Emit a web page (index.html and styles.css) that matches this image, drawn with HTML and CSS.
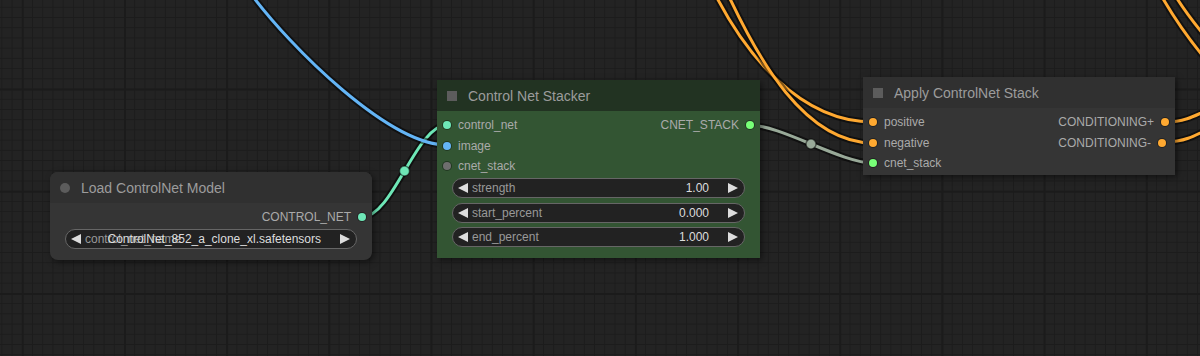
FILE: index.html
```html
<!DOCTYPE html>
<html lang="en">
<head>
    <meta charset="UTF-8">
    <title>Control Net Stack</title>
    <link rel="stylesheet" href="styles.css">
</head>
<body>

<div class="canvas">
    <!-- links are drawn under the nodes -->
    <svg class="links" width="1200" height="356" viewBox="0 0 1200 356">
        <g class="link link-cnet">
            <path class="link-border" d="M 362 217 C 393 217, 416 125, 447 125"/>
            <path class="link-line" d="M 362 217 C 393 217, 416 125, 447 125"/>
            <circle cx="404.5" cy="171" r="5"/>
        </g>
        <g class="link link-image">
            <path class="link-border" d="M 248 -10 C 292 50, 390 145, 447 145"/>
            <path class="link-line" d="M 248 -10 C 292 50, 390 145, 447 145"/>
        </g>
        <g class="link link-stack">
            <path class="link-border" d="M 749 125 C 781 125, 841 163, 873 163"/>
            <path class="link-line" d="M 749 125 C 781 125, 841 163, 873 163"/>
            <circle cx="811" cy="144" r="5"/>
        </g>
        <g class="link link-cond">
            <path class="link-border" d="M 712 -12 C 745 55, 800 122, 873 122"/>
            <path class="link-line" d="M 712 -12 C 745 55, 800 122, 873 122"/>
            <path class="link-border" d="M 725 -12 C 758 60, 805 143, 873 143"/>
            <path class="link-line" d="M 725 -12 C 758 60, 805 143, 873 143"/>
            <path class="link-border" d="M 1165 122 C 1190 122, 1200 112, 1230 100"/>
            <path class="link-line" d="M 1165 122 C 1190 122, 1200 112, 1230 100"/>
            <path class="link-border" d="M 1165 142 C 1190 142, 1200 132, 1230 118"/>
            <path class="link-line" d="M 1165 142 C 1190 142, 1200 132, 1230 118"/>
            <path class="link-border" d="M 1158 -10 C 1172 15, 1188 40, 1215 70"/>
            <path class="link-line" d="M 1158 -10 C 1172 15, 1188 40, 1215 70"/>
            <path class="link-border" d="M 1172 -10 C 1182 8, 1195 25, 1215 48"/>
            <path class="link-line" d="M 1172 -10 C 1182 8, 1195 25, 1215 48"/>
        </g>
    </svg>

    <div class="node node-round node-load">
        <div class="node-title"><span class="title-box title-dot"></span>Load ControlNet Model</div>
        <div class="node-body">
            <div class="slots">
                <div class="inputs"></div>
                <div class="outputs">
                    <div class="slot">CONTROL_NET<span class="dot c-cnet"></span></div>
                </div>
            </div>
            <div class="widgets">
                <div class="widget">
                    <span class="arrow arrow-left"></span>
                    <div class="w-text">
                        <span class="w-label">control_net_name</span>
                        <span class="w-value">ControlNet_852_a_clone_xl.safetensors</span>
                    </div>
                    <span class="arrow arrow-right"></span>
                </div>
            </div>
        </div>
    </div>

    <div class="node node-green node-stacker">
        <div class="node-title"><span class="title-box"></span>Control Net Stacker</div>
        <div class="node-body">
            <div class="slots">
                <div class="inputs">
                    <div class="slot"><span class="dot c-cnet"></span>control_net</div>
                    <div class="slot"><span class="dot c-image"></span>image</div>
                    <div class="slot"><span class="dot c-empty"></span>cnet_stack</div>
                </div>
                <div class="outputs">
                    <div class="slot">CNET_STACK<span class="dot c-stack"></span></div>
                </div>
            </div>
            <div class="widgets">
                <div class="widget">
                    <span class="arrow arrow-left"></span>
                    <div class="w-text">
                        <span class="w-label">strength</span>
                        <span class="w-value">1.00</span>
                    </div>
                    <span class="arrow arrow-right"></span>
                </div>
                <div class="widget">
                    <span class="arrow arrow-left"></span>
                    <div class="w-text">
                        <span class="w-label">start_percent</span>
                        <span class="w-value">0.000</span>
                    </div>
                    <span class="arrow arrow-right"></span>
                </div>
                <div class="widget">
                    <span class="arrow arrow-left"></span>
                    <div class="w-text">
                        <span class="w-label">end_percent</span>
                        <span class="w-value">1.000</span>
                    </div>
                    <span class="arrow arrow-right"></span>
                </div>
            </div>
        </div>
    </div>

    <div class="node node-apply">
        <div class="node-title"><span class="title-box"></span>Apply ControlNet Stack</div>
        <div class="node-body">
            <div class="slots">
                <div class="inputs">
                    <div class="slot"><span class="dot c-cond"></span>positive</div>
                    <div class="slot"><span class="dot c-cond"></span>negative</div>
                    <div class="slot"><span class="dot c-stack"></span>cnet_stack</div>
                </div>
                <div class="outputs">
                    <div class="slot">CONDITIONING+<span class="dot c-cond"></span></div>
                    <div class="slot">CONDITIONING-<span class="dot c-cond"></span></div>
                </div>
            </div>
        </div>
    </div>
</div>

</body>
</html>
```

FILE: styles.css
```css
* {
    box-sizing: border-box;
}
body {
    margin: 0;
    background-color: #222;
    font-family: "Liberation Sans", Arial, sans-serif;
    overflow: hidden;
}
.canvas {
    position: relative;
    width: 1200px;
    height: 356px;
    overflow: hidden;
    background-color: #232323;
    background-image:
        linear-gradient(#1b1b1b 2px, transparent 2px),
        linear-gradient(90deg, #1b1b1b 2px, transparent 2px),
        linear-gradient(#1c1c1c 1px, transparent 1px),
        linear-gradient(90deg, #1c1c1c 1px, transparent 1px);
    background-size: 102.2px 102.2px, 102.2px 102.2px, 10.22px 10.22px, 10.22px 10.22px;
    background-position: 0 88.6px, 21.8px 0, 0 6.8px, 1.4px 0;
}

/* links */
.links {
    position: absolute;
    left: 0;
    top: 0;
}
.link path {
    fill: none;
}
.link-border {
    stroke: rgba(0, 0, 0, 0.5);
    stroke-width: 7;
}
.link-line {
    stroke-width: 3;
}
.link circle {
    stroke: rgba(0, 0, 0, 0.5);
    stroke-width: 1.5;
}
.link-cnet .link-line { stroke: #6ee7b7; }
.link-cnet circle { fill: #6ee7b7; }
.link-image .link-line { stroke: #64b5f6; }
.link-stack .link-line { stroke: #99aa99; }
.link-stack circle { fill: #99aa99; }
.link-cond .link-line { stroke: #ffa931; }

/* nodes */
.node {
    position: absolute;
    background-color: #353535;
    box-shadow: 2px 2px 6px rgba(0, 0, 0, 0.5);
}
.node-round {
    border-radius: 8px;
}
.node-load {
    left: 50px;
    top: 172px;
    width: 322px;
}
.node-stacker {
    left: 437px;
    top: 80px;
    width: 323px;
}
.node-apply {
    left: 863px;
    top: 77px;
    width: 312px;
}
.node-title {
    height: 31px;
    display: flex;
    align-items: center;
    gap: 11px;
    padding-left: 10px;
    font-size: 14px;
    color: #9c9c9c;
    background-color: #303030;
}
.node-round .node-title {
    border-radius: 8px 8px 0 0;
}
.node-green {
    background-color: #335533;
}
.node-green .node-title {
    background-color: #223322;
}
.title-box {
    width: 10px;
    height: 10px;
    background-color: #5c5c5c;
}
.title-dot {
    border-radius: 50%;
}
.node-body {
    padding: 4px 0 11px;
}
.node-apply .node-body {
    padding-bottom: 1.5px;
}
.slots {
    display: flex;
    justify-content: space-between;
}
.slot {
    display: flex;
    align-items: center;
    gap: 7px;
    height: 20.5px;
    font-size: 12px;
    color: #aaa;
}
.inputs .slot {
    padding-left: 6px;
}
.outputs .slot {
    padding-right: 6px;
}
.dot {
    width: 8px;
    height: 8px;
    border-radius: 50%;
    box-shadow: 0 0 0 1px rgba(0, 0, 0, 0.35);
}
.c-cnet { background-color: #6ee7b7; }
.c-image { background-color: #64b5f6; }
.c-stack { background-color: #77ff77; }
.c-cond { background-color: #ffa931; }
.c-empty { background-color: #6e6e6e; }

/* widgets */
.widgets {
    display: flex;
    flex-direction: column;
    gap: 4.5px;
    margin: 1.5px 15px 0;
}
.widget {
    height: 20px;
    display: flex;
    align-items: center;
    padding: 0 6px 0 5px;
    border: 1px solid #666;
    border-radius: 10px;
    background-color: #222;
    font-size: 12px;
}
.arrow {
    width: 0;
    height: 0;
    border-top: 5px solid transparent;
    border-bottom: 5px solid transparent;
}
.arrow-left {
    border-right: 10px solid #ddd;
}
.arrow-right {
    border-left: 10px solid #ddd;
}
.w-text {
    flex: 1;
    display: grid;
    margin: 0 19px 0 4px;
    white-space: nowrap;
}
.w-label,
.w-value {
    grid-area: 1 / 1;
}
.w-label {
    color: #999;
}
.w-value {
    color: #ddd;
    justify-self: end;
}
```
